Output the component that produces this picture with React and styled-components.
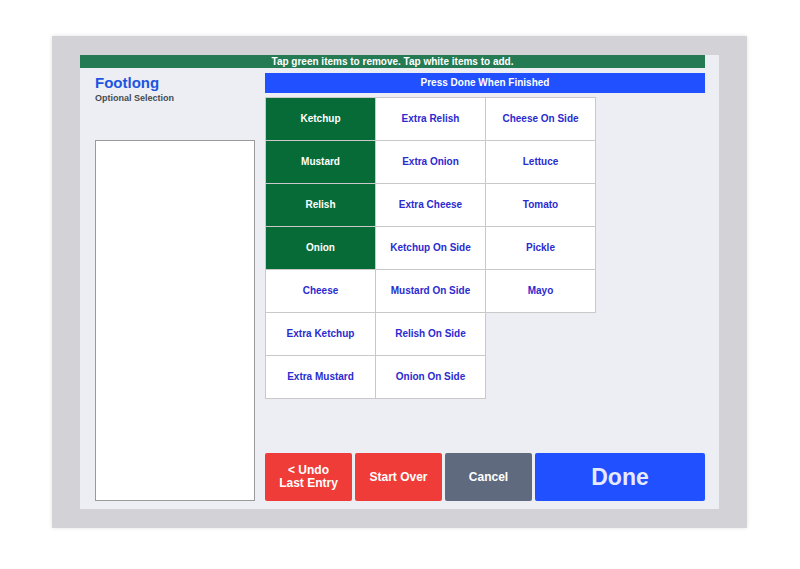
import React from "react";
import styled, { createGlobalStyle } from "styled-components";

const Global = createGlobalStyle`
  html, body { margin: 0; padding: 0; background: #ffffff; }
  body { font-family: "Liberation Sans", Arial, sans-serif; }
`;

const Page = styled.div`
  padding: 36px 53px 41px 52px;
`;

const Frame = styled.div`
  background: #d3d2d7;
  padding: 19px 28px 19px 28px;
  box-shadow: 0 0 4px rgba(0, 0, 0, 0.12);
`;

const Panel = styled.div`
  background: #eceef3;
  height: 454px;
  display: flex;
  flex-direction: column;
`;

const TopBar = styled.div`
  background: #237a53;
  color: #ffffff;
  height: 13px;
  margin-right: 14px;
  font-size: 10px;
  font-weight: bold;
  line-height: 13px;
  text-align: center;
`;

const Body = styled.div`
  flex: 1;
  display: flex;
  gap: 10px;
  padding: 0 14px 8px 15px;
`;

const LeftCol = styled.div`
  width: 160px;
  display: flex;
  flex-direction: column;
`;

const Title = styled.div`
  margin-top: 6px;
  font-size: 15px;
  font-weight: bold;
  color: #1c55e0;
  line-height: 18px;
`;

const Subtitle = styled.div`
  margin-top: 1px;
  font-size: 9px;
  font-weight: bold;
  color: #444a52;
  line-height: 11px;
`;

const OrderBox = styled.div`
  margin-top: 36px;
  flex: 1;
  background: #ffffff;
  border: 1px solid #9a9a9a;
`;

const RightCol = styled.div`
  flex: 1;
  display: flex;
  flex-direction: column;
  padding-top: 5px;
`;

const BlueBar = styled.div`
  background: #2050ff;
  color: #ffffff;
  height: 20px;
  line-height: 20px;
  font-size: 10px;
  font-weight: bold;
  text-align: center;
`;

const Grid = styled.div`
  margin-top: 4px;
  display: grid;
  grid-template-rows: repeat(7, 43px);
  grid-auto-columns: 110px;
  grid-auto-flow: column;
`;

const Cell = styled.div`
  display: flex;
  align-items: center;
  justify-content: center;
  background: ${(p) => (p.$on ? "#066b36" : "#ffffff")};
  color: ${(p) => (p.$on ? "#ffffff" : "#2b2bd0")};
  border: 1px solid #c9c9c9;
  margin: 0 -1px -1px 0;
  padding-bottom: 1px;
  font-size: 10px;
  font-weight: bold;
`;

const Buttons = styled.div`
  margin-top: auto;
  display: flex;
  gap: 3px;
  height: 48px;
`;

const Btn = styled.div`
  width: ${(p) => (p.$wide ? "auto" : "87px")};
  flex: ${(p) => (p.$wide ? 1 : "none")};
  background: ${(p) => p.$bg};
  color: ${(p) => (p.$wide ? "#e6eaff" : "#ffffff")};
  border-radius: 2px;
  display: flex;
  align-items: center;
  justify-content: center;
  text-align: center;
  font-size: ${(p) => (p.$wide ? "23px" : "12px")};
  font-weight: bold;
  line-height: 13px;
`;

const items = [
  ["Ketchup", true],
  ["Mustard", true],
  ["Relish", true],
  ["Onion", true],
  ["Cheese"],
  ["Extra Ketchup"],
  ["Extra Mustard"],
  ["Extra Relish"],
  ["Extra Onion"],
  ["Extra Cheese"],
  ["Ketchup On Side"],
  ["Mustard On Side"],
  ["Relish On Side"],
  ["Onion On Side"],
  ["Cheese On Side"],
  ["Lettuce"],
  ["Tomato"],
  ["Pickle"],
  ["Mayo"],
];

export default function App() {
  return (
    <>
      <Global />
      <Page>
        <Frame>
          <Panel>
            <TopBar>Tap green items to remove. Tap white items to add.</TopBar>
            <Body>
              <LeftCol>
                <Title>Footlong</Title>
                <Subtitle>Optional Selection</Subtitle>
                <OrderBox />
              </LeftCol>
              <RightCol>
                <BlueBar>Press Done When Finished</BlueBar>
                <Grid>
                  {items.map(([name, on]) => (
                    <Cell key={name} $on={on}>
                      {name}
                    </Cell>
                  ))}
                </Grid>
                <Buttons>
                  <Btn $bg="#f03c38">
                    &lt; Undo
                    <br />
                    Last Entry
                  </Btn>
                  <Btn $bg="#f03c38">Start Over</Btn>
                  <Btn $bg="#5f6a7e">Cancel</Btn>
                  <Btn $bg="#2050ff" $wide>
                    Done
                  </Btn>
                </Buttons>
              </RightCol>
            </Body>
          </Panel>
        </Frame>
      </Page>
    </>
  );
}
